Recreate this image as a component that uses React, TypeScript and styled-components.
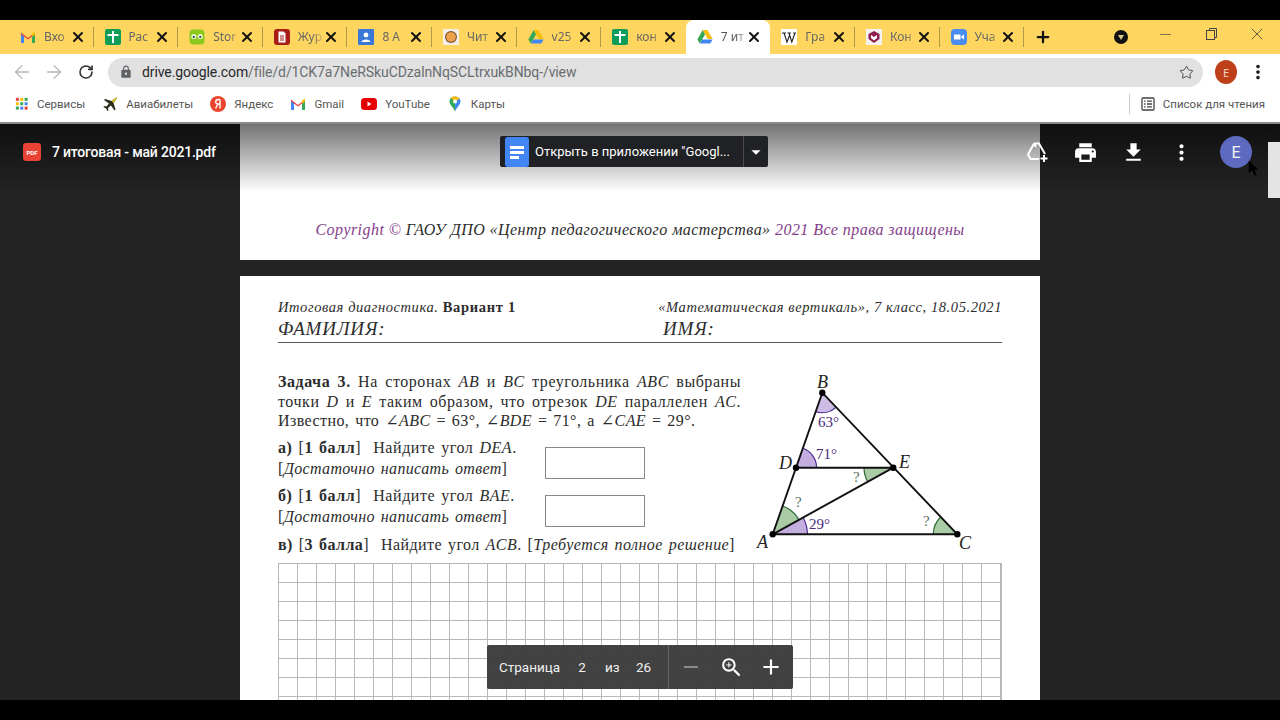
import styled, { createGlobalStyle } from "styled-components";
import { ArrowLeft, ArrowRight, Minus, Plus, RotateCw, Star, X } from "lucide-react";
import { MdAdd, MdArrowDropDown, MdFileDownload, MdLock, MdMoreVert, MdPrint, MdRemove, MdZoomIn } from "react-icons/md";

const GlobalStyle = createGlobalStyle`
	html, body {
		margin: 0;
		padding: 0;
		background: #000;
		overflow: hidden;
	}
	* {
		box-sizing: border-box;
	}
`;

function Favicon({ kind, size = 16 }: { kind: string; size?: number }) {
	const svg = { width: size, height: size, viewBox: "0 0 16 16" };
	switch (kind) {
		case "gmail":
			return (
				<svg {...svg}>
					<path d="M1 3.5 L8 9 L15 3.5 V14 H12 V7.5 L8 10.6 L4 7.5 V14 H1 Z" fill="#ea4335" />
					<path d="M1 5 V14 H4 V7.5 Z" fill="#4285f4" />
					<path d="M15 5 V14 H12 V7.5 Z" fill="#34a853" />
					<path d="M12 4.5 L15 2.5 V5.5 L12 7.8 Z" fill="#fbbc04" />
				</svg>
			);
		case "sheets":
			return (
				<svg {...svg}>
					<rect width="16" height="16" rx="2" fill="#0f9d58" />
					<path d="M2.5 5 H7 V2 H9 V5 H13.5 V7 H9 V14 H7 V7 H2.5 Z" fill="#fff" />
				</svg>
			);
		case "owl":
			return (
				<svg {...svg}>
					<rect x="0.5" y="0.5" width="15" height="15" rx="4" fill="#8cc81e" />
					<circle cx="4.8" cy="7.5" r="2.6" fill="#e8f5d0" />
					<circle cx="11.2" cy="7.5" r="2.6" fill="#e8f5d0" />
					<circle cx="4.8" cy="8" r="1.1" fill="#234" />
					<circle cx="11.2" cy="8" r="1.1" fill="#234" />
				</svg>
			);
		case "journal":
			return (
				<svg {...svg}>
					<rect width="16" height="16" rx="3" fill="#a81d16" />
					<path d="M4.5 2.5 H9.5 L11.5 4.5 V13.5 H4.5 Z" fill="#fff" />
					<path d="M6 7 H10 M6 9 H10 M6 11 H10" stroke="#a81d16" />
				</svg>
			);
		case "contact":
			return (
				<svg {...svg}>
					<rect width="16" height="16" rx="1" fill="#3a78d8" />
					<circle cx="8" cy="6" r="2.4" fill="#fff" />
					<path d="M3.5 13 C3.5 9.5 12.5 9.5 12.5 13 Z" fill="#fff" />
				</svg>
			);
		case "egg":
			return (
				<svg {...svg}>
					<rect width="16" height="16" fill="#f3efe6" />
					<circle cx="8" cy="8" r="6" fill="#7a5a3a" />
					<circle cx="8" cy="8" r="4.8" fill="#f0a04a" />
				</svg>
			);
		case "drive":
			return (
				<svg {...svg}>
					<path d="M5.6 1 H10.4 L15.6 10 H10.8 Z" fill="#fbbc04" />
					<path d="M5.6 1 L0.4 10.4 L2.8 14.6 L8 5.4 Z" fill="#34a853" />
					<path d="M5.2 10.4 H15.6 L13.2 14.6 H2.8 Z" fill="#4285f4" />
				</svg>
			);
		case "wiki":
			return (
				<svg {...svg}>
					<rect width="16" height="16" fill="#fff" />
					<path d="M1 4 H5 M3 4 L6 13 L8.5 6.5 M6.5 4 H10 M8 4 L10.8 13 L14 4 M12.2 4 H15" stroke="#222" strokeWidth="1.1" fill="none" />
				</svg>
			);
		case "kon":
			return (
				<svg {...svg}>
					<rect width="16" height="16" fill="#f5f0f2" />
					<path d="M8 2 L13.5 5 V10 L8 14 L2.5 10 V5 Z" fill="#8e1f4f" />
					<path d="M5 6 L8 8 L11 6 V9 L8 11.5 L5 9 Z" fill="#fff" />
				</svg>
			);
		case "zoom":
			return (
				<svg {...svg}>
					<rect width="16" height="16" rx="4" fill="#4a8cf0" />
					<path d="M3 5.5 H9.5 V10.5 H3 Z M10.3 7.4 L13 5.5 V10.5 L10.3 8.6 Z" fill="#fff" />
				</svg>
			);
		case "apps":
			return (
				<svg {...svg}>
					{[1, 6, 11].flatMap((y, r) =>
						[1, 6, 11].map((x, c) => (
							<rect key={`${r}${c}`} x={x} y={y} width="3.4" height="3.4" fill={["#ea4335", "#fbbc04", "#34a853", "#4285f4"][(r + c) % 4]} />
						)),
					)}
				</svg>
			);
		case "plane":
			return (
				<svg {...svg}>
					<path d="M14.5 1.5 L9.5 5 L3 3 L2 4 L7 7.5 L4.5 10.5 L2 10 L1.5 11 L4 12.5 L5.5 15 L6.5 14.5 L6 12 L9 9.5 L12.5 14.5 L13.5 13.5 L11.5 7 L15 2 Z" fill="#2b2b1a" />
					<path d="M14.5 1.5 L9.5 5 L11.5 7 L15 2 Z" fill="#d6c21e" />
				</svg>
			);
		case "yandex":
			return (
				<svg {...svg}>
					<circle cx="8" cy="8" r="8" fill="#e8452c" />
					<path d="M10 3.5 V12.5 M10 3.5 H8 C5 3.5 5 8 8 8 H10 M8 8 L5.5 12.5" stroke="#fff" strokeWidth="1.4" fill="none" />
				</svg>
			);
		case "youtube":
			return (
				<svg {...svg}>
					<rect y="2" width="16" height="12" rx="3.5" fill="#e60000" />
					<path d="M6.5 5.5 L10.5 8 L6.5 10.5 Z" fill="#fff" />
				</svg>
			);
		case "maps":
			return (
				<svg {...svg}>
					<path d="M8 0.5 C4.5 0.5 2.5 3 2.5 5.6 C2.5 9 6.5 11.5 8 15.5 Z" fill="#34a853" />
					<path d="M8 0.5 C11.5 0.5 13.5 3 13.5 5.6 C13.5 9 9.5 11.5 8 15.5 Z" fill="#4285f4" />
					<path d="M4 2 C5 1 6.5 0.5 8 0.5 C10 0.5 11.5 1.3 12.5 2.6 L8 6 Z" fill="#fbbc04" />
					<circle cx="8" cy="5.6" r="2" fill="#fff" />
				</svg>
			);
		default:
			return null;
	}
}

// titles are cut short by the browser in the screenshot
const tabs = [
	{ icon: "gmail", title: "Вхо" },
	{ icon: "sheets", title: "Рас" },
	{ icon: "owl", title: "Stor" },
	{ icon: "journal", title: "Жур" },
	{ icon: "contact", title: "8 А" },
	{ icon: "egg", title: "Чит" },
	{ icon: "drive", title: "v25" },
	{ icon: "sheets", title: "кон" },
	{ icon: "drive", title: "7 ит", active: true },
	{ icon: "wiki", title: "Гра" },
	{ icon: "kon", title: "Кон" },
	{ icon: "zoom", title: "Уча" },
];

const bookmarks = [
	{ icon: "apps", label: "Сервисы" },
	{ icon: "plane", label: "Авиабилеты" },
	{ icon: "yandex", label: "Яндекс" },
	{ icon: "gmail", label: "Gmail" },
	{ icon: "youtube", label: "YouTube" },
	{ icon: "maps", label: "Карты" },
];

function TriangleFigure() {
	return (
		<FigureSvg viewBox="750 372 252 183" width="252" height="183">
			<path d="M822.3 392.7 L815.7 411.6 A20 20 0 0 0 836 407.2 Z" fill="#cdbbe6" />
			<path d="M815.7 411.6 A20 20 0 0 0 836 407.2" fill="none" stroke="#4b2a8c" strokeWidth="1.2" />
			<path d="M796 467.7 L816.6 467.7 A20.6 20.6 0 0 0 802.8 448.3 Z" fill="#c4aee0" />
			<path d="M816.6 467.7 A20.6 20.6 0 0 0 802.8 448.3" fill="none" stroke="#4b2a8c" strokeWidth="1.2" />
			<path d="M772.7 534.3 L807.4 534.3 A34.7 34.7 0 0 0 803.1 517.5 Z" fill="#c4aee0" />
			<path d="M807.4 534.3 A34.7 34.7 0 0 0 803.1 517.5" fill="none" stroke="#4b2a8c" strokeWidth="1.2" />
			<path d="M772.7 534.3 L798.9 519.8 A30 30 0 0 0 782.6 506 Z" fill="#a9cba6" />
			<path d="M798.9 519.8 A30 30 0 0 0 782.6 506" fill="none" stroke="#2f6b3a" strokeWidth="1.2" />
			<path d="M893.3 467.7 L864 467.7 A29.3 29.3 0 0 0 867.7 481.9 Z" fill="#a9cba6" />
			<path d="M864 467.7 A29.3 29.3 0 0 0 867.7 481.9" fill="none" stroke="#2f6b3a" strokeWidth="1.2" />
			<path d="M957.3 534.3 L933.3 534.3 A24 24 0 0 1 940.7 517 Z" fill="#a9cba6" />
			<path d="M933.3 534.3 A24 24 0 0 1 940.7 517" fill="none" stroke="#2f6b3a" strokeWidth="1.2" />
			<path d="M822.3 392.7 L772.7 534.3 H957.3 Z M796 467.7 H893.3 L772.7 534.3" fill="none" stroke="#111" strokeWidth="1.9" />
			{[
				[822.3, 392.7],
				[772.7, 534.3],
				[957.3, 534.3],
				[796, 467.7],
				[893.3, 467.7],
			].map(([cx, cy]) => (
				<circle key={cx} cx={cx} cy={cy} r="3.2" fill="#000" />
			))}
			<PointLabel x="817" y="388">B</PointLabel>
			<PointLabel x="779" y="469">D</PointLabel>
			<PointLabel x="899" y="468">E</PointLabel>
			<PointLabel x="757" y="548">A</PointLabel>
			<PointLabel x="959" y="549">C</PointLabel>
			<AngleLabel x="818" y="427">63°</AngleLabel>
			<AngleLabel x="816" y="459">71°</AngleLabel>
			<AngleLabel x="809" y="529">29°</AngleLabel>
			<QuestionLabel x="853" y="482">?</QuestionLabel>
			<QuestionLabel x="795" y="507">?</QuestionLabel>
			<QuestionLabel x="923" y="526">?</QuestionLabel>
		</FigureSvg>
	);
}

export default function App() {
	return (
		<>
			<GlobalStyle />
			<Screen>
				<Letterbox />
				<TabStrip>
					{tabs.map((tab, index) => {
						const nextActive = tabs[index + 1]?.active;
						return (
							<Tab key={tab.title} $active={tab.active}>
								<TabInner $divider={!tab.active && !nextActive}>
									<Favicon kind={tab.icon} />
									<TabTitle $active={tab.active}>{tab.title}</TabTitle>
									<X size={16} strokeWidth={3} color="#111" />
								</TabInner>
							</Tab>
						);
					})}
					<NewTab>
						<Plus size={18} strokeWidth={3} color="#111" />
					</NewTab>
					<ThemeBadge />
					<WindowControls>
						<WindowButton>
							<Minus size={17} strokeWidth={1} color="#444" />
						</WindowButton>
						<WindowButton>
							<svg width="11" height="12" viewBox="0 0 11 12" fill="none" stroke="#444">
								<path d="M3.5 2.5 V0.5 H10.5 V9.5 H8.5" />
								<rect x="0.5" y="2.5" width="8" height="9" />
							</svg>
						</WindowButton>
						<WindowButton>
							<X size={20} strokeWidth={1} color="#444" />
						</WindowButton>
					</WindowControls>
				</TabStrip>

				<Toolbar>
					<NavButton>
						<ArrowLeft size={22} strokeWidth={1.4} color="#b4b6b8" />
					</NavButton>
					<NavButton>
						<ArrowRight size={22} strokeWidth={1.4} color="#b4b6b8" />
					</NavButton>
					<NavButton>
						<RotateCw size={16} strokeWidth={2.4} color="#333" />
					</NavButton>
					<Omnibox>
						<MdLock size={14} color="#5f6368" />
						<UrlText>
							<b>drive.google.com</b>/file/d/1CK7a7NeRSkuCDzalnNqSCLtrxukBNbq-/view
						</UrlText>
						<Star size={15} strokeWidth={1.5} color="#444" />
					</Omnibox>
					<ProfileDot>E</ProfileDot>
					<MdMoreVert size={22} color="#222" />
				</Toolbar>

				<BookmarkBar>
					{bookmarks.map((item) => (
						<Bookmark key={item.label}>
							<Favicon kind={item.icon} size={item.icon === "apps" ? 14 : 16} />
							{item.label}
						</Bookmark>
					))}
					<ReadingList>
						<svg width="14" height="14" viewBox="0 0 14 14" fill="none" stroke="#444" strokeWidth="1.3">
							<rect x="1" y="1" width="12" height="12" rx="1" />
							<path d="M3 4.2 H4.5 M6 4.2 H11 M3 7 H4.5 M6 7 H11 M3 9.8 H4.5 M6 9.8 H11" />
						</svg>
						Список для чтения
					</ReadingList>
				</BookmarkBar>

				<Viewer>
					<PageStack>
						<CopyrightPage>
							<CopyrightLine>
								<Purple>Copyright ©</Purple> ГАОУ ДПО «Центр педагогического мастерства» <Purple>2021 Все права защищены</Purple>
							</CopyrightLine>
						</CopyrightPage>
						<TaskPage>
							<SheetHead>
								<span>
									Итоговая диагностика. <HeadBold>Вариант 1</HeadBold>
								</span>
								<span>«Математическая вертикаль», 7 класс, 18.05.2021</span>
							</SheetHead>
							<NameRow>
								<NameCell>ФАМИЛИЯ:</NameCell>
								<span>ИМЯ:</span>
							</NameRow>
							<ProblemRow>
								<ProblemText>
									<JustLine>
										<b>Задача 3.</b> На сторонах <i>AB</i> и <i>BC</i> треугольника <i>ABC</i> выбраны
									</JustLine>
									<JustLine>
										точки <i>D</i> и <i>E</i> таким образом, что отрезок <i>DE</i> параллелен <i>AC</i>.
									</JustLine>
									<FactLine>
										Известно, что ∠<i>ABC</i> = 63°, ∠<i>BDE</i> = 71°, а ∠<i>CAE</i> = 29°.
									</FactLine>
									<AnswerRow>
										<div>
											<FreeLine>
												<b>а)</b> [<b>1 балл</b>] &nbsp;Найдите угол <i>DEA</i>.
											</FreeLine>
											<HintLine>
												[<i>Достаточно написать ответ</i>]
											</HintLine>
										</div>
										<AnswerBox />
									</AnswerRow>
									<AnswerRow>
										<div>
											<FreeLine>
												<b>б)</b> [<b>1 балл</b>] &nbsp;Найдите угол <i>BAE</i>.
											</FreeLine>
											<HintLine>
												[<i>Достаточно написать ответ</i>]
											</HintLine>
										</div>
										<AnswerBox />
									</AnswerRow>
									<LastLine>
										<b>в)</b> [<b>3 балла</b>] &nbsp;Найдите угол <i>ACB</i>. [<i>Требуется полное решение</i>]
									</LastLine>
								</ProblemText>
								<TriangleFigure />
							</ProblemRow>
							<GraphPaper />
						</TaskPage>
					</PageStack>

					<ViewerHeader>
						<FileTitle>
							<PdfBadge>PDF</PdfBadge>
							7 итоговая - май 2021.pdf
						</FileTitle>
						<OpenWith>
							<svg width="24" height="30" viewBox="0 0 24 30">
								<rect width="24" height="30" rx="3" fill="#4285f4" />
								<path d="M5 9 H19 V12 H5 Z M5 14 H19 V17 H5 Z M5 19 H14 V22 H5 Z" fill="#fff" />
							</svg>
							<OpenWithLabel>Открыть в приложении "Googl...</OpenWithLabel>
							<OpenWithCaret>
								<MdArrowDropDown size={22} color="#fff" />
							</OpenWithCaret>
						</OpenWith>
						<HeaderActions>
							<ActionButton>
								<svg width="24" height="24" viewBox="0 0 24 24" fill="none" stroke="#fff" strokeWidth="2" strokeLinejoin="round">
									<path d="M9 3.5 H14 L20 14 M9 3.5 L3 14.5 L5.5 19 H14 M9 3.5 L11 7" />
									<path d="M19 15 V22 M15.5 18.5 H22.5" />
								</svg>
							</ActionButton>
							<ActionButton>
								<MdPrint size={25} color="#fff" />
							</ActionButton>
							<ActionButton>
								<MdFileDownload size={25} color="#fff" />
							</ActionButton>
							<ActionButton>
								<MdMoreVert size={25} color="#fff" />
							</ActionButton>
							<AccountButton>E</AccountButton>
						</HeaderActions>
					</ViewerHeader>

					<MouseCursor width="12" height="18" viewBox="0 0 16 24">
						<path d="M1 1 V18 L5.5 14 L8.5 21 L11.5 19.8 L8.6 13 H14 Z" fill="#000" />
					</MouseCursor>
					<ScrollThumb />

					<PageControls>
						<PageLabel $width={72} $pad={12}>
							Страница
						</PageLabel>
						<PageLabel $width={46} $center>
							2
						</PageLabel>
						<PageLabel $width={14} $center>
							из
						</PageLabel>
						<PageLabel $width={49} $center>
							26
						</PageLabel>
						<ControlDivider />
						<ZoomButton>
							<MdRemove size={24} color="#8a8a8a" />
						</ZoomButton>
						<ZoomButton>
							<MdZoomIn size={25} color="#fff" />
						</ZoomButton>
						<ZoomButton>
							<MdAdd size={26} color="#fff" />
						</ZoomButton>
					</PageControls>
				</Viewer>
				<Letterbox />
			</Screen>
		</>
	);
}

const chrome = `"Noto Sans", "Liberation Sans", sans-serif`;
const roboto = `Roboto, "Liberation Sans", sans-serif`;
const paper = `"Liberation Serif", "DejaVu Serif", serif`;

const Screen = styled.div`
	width: 1280px;
	height: 720px;
	display: flex;
	flex-direction: column;
	background: #000;
	overflow: hidden;
	font-family: ${chrome};
`;
const Letterbox = styled.div`
	height: 20px;
	flex: none;
	background: #000;
`;
const TabStrip = styled.div`
	height: 34px;
	flex: none;
	display: flex;
	align-items: center;
	padding-left: 9px;
	background: #fdd55f;
`;
const Tab = styled.div<{ $active?: boolean }>`
	width: 84.6px;
	height: 34px;
	flex: none;
	display: flex;
	align-items: center;
	padding-bottom: 1px;
	background: ${(p) => (p.$active ? "#fff" : "transparent")};
	border-radius: ${(p) => (p.$active ? "8px 8px 0 0" : "0")};
`;
const TabInner = styled.div<{ $divider?: boolean }>`
	width: 100%;
	height: 20px;
	display: flex;
	align-items: center;
	padding: 0 7px 0 11px;
	border-right: 1px solid ${(p) => (p.$divider ? "#b09a4c" : "transparent")};
`;
const TabTitle = styled.span<{ $active?: boolean }>`
	flex: 1;
	margin-left: 8px;
	white-space: nowrap;
	font-size: 12px;
	color: ${(p) => (p.$active ? "#555" : "#666")};
	-webkit-mask-image: linear-gradient(to right, #000 60%, rgba(0, 0, 0, 0.35) 90%);
	mask-image: linear-gradient(to right, #000 60%, rgba(0, 0, 0, 0.35) 90%);
`;
const NewTab = styled.div`
	margin-left: 10px;
	display: flex;
`;
const ThemeBadge = styled.div`
	width: 14px;
	height: 14px;
	margin-left: 62px;
	border-radius: 50%;
	background: #111;
	display: flex;
	align-items: center;
	justify-content: center;
	&::after {
		content: "";
		border-left: 3.5px solid transparent;
		border-right: 3.5px solid transparent;
		border-top: 5px solid #d8c98a;
	}
`;
const WindowControls = styled.div`
	margin-left: auto;
	align-self: flex-start;
	display: flex;
`;
const WindowButton = styled.div`
	width: 46px;
	height: 28px;
	display: flex;
	align-items: center;
	justify-content: center;
`;
const Toolbar = styled.div`
	height: 36px;
	flex: none;
	display: flex;
	align-items: center;
	padding-left: 6px;
	background: #fff;
`;
const NavButton = styled.div`
	width: 32px;
	display: flex;
	justify-content: center;
`;
const Omnibox = styled.div`
	width: 1095px;
	height: 29px;
	margin-left: 6px;
	padding: 0 9px 0 11px;
	display: flex;
	align-items: center;
	border-radius: 15px;
	background: #e1e1e1;
`;
const UrlText = styled.span`
	flex: 1;
	margin-left: 9px;
	font-family: ${roboto};
	font-size: 14px;
	letter-spacing: -0.1px;
	color: #6a6d70;
	b {
		font-weight: 400;
		color: #26282b;
	}
`;
const ProfileDot = styled.div`
	width: 22px;
	height: 24px;
	margin: 0 10px 0 12px;
	border-radius: 50%;
	background: #bf3f18;
	color: #f3d5c8;
	font-size: 11px;
	display: flex;
	align-items: center;
	justify-content: center;
`;
const BookmarkBar = styled.div`
	height: 34px;
	flex: none;
	display: flex;
	align-items: center;
	gap: 17px;
	padding: 0 15px 4px;
	background: #fff;
	border-bottom: 2px solid #8a8a8a;
`;
const Bookmark = styled.div`
	display: flex;
	align-items: center;
	gap: 8px;
	font-family: ${roboto};
	font-size: 11.5px;
	color: #555;
`;
const ReadingList = styled(Bookmark)`
	margin-left: auto;
	height: 20px;
	padding-left: 11px;
	border-left: 1px solid #ccc;
`;
const Viewer = styled.div`
	position: relative;
	flex: 1;
	min-height: 0;
	background: #232323;
	overflow: hidden;
`;
const PageStack = styled.div`
	width: 800px;
	height: 100%;
	margin: 0 auto;
	display: flex;
	flex-direction: column;
	gap: 16px;
	font-family: ${paper};
	color: #2c2c2c;
`;
const CopyrightPage = styled.div`
	height: 136px;
	flex: none;
	display: flex;
	align-items: flex-end;
	justify-content: center;
	padding-bottom: 21px;
	background: #fff;
`;
const CopyrightLine = styled.div`
	font-size: 16px;
	font-style: italic;
	letter-spacing: 0.45px;
	line-height: 18px;
`;
const Purple = styled.span`
	color: #84408a;
`;
const TaskPage = styled.div`
	flex: 1;
	min-height: 0;
	display: flex;
	flex-direction: column;
	padding: 21px 38px 0;
	background: #fff;
`;
const SheetHead = styled.div`
	height: 20px;
	display: flex;
	justify-content: space-between;
	font-size: 14.5px;
	font-style: italic;
	line-height: 20px;
	letter-spacing: 0.58px;
`;
const HeadBold = styled.b`
	font-style: normal;
	letter-spacing: 0.7px;
`;
const NameRow = styled.div`
	height: 26px;
	display: flex;
	font-size: 19px;
	font-style: italic;
	line-height: 24px;
	letter-spacing: 0.8px;
	border-bottom: 1px solid #555;
`;
const NameCell = styled.span`
	width: 385px;
`;
const ProblemRow = styled.div`
	margin-top: 29px;
	display: flex;
`;
const ProblemText = styled.div`
	width: 472px;
	flex: none;
	font-size: 16px;
	line-height: 20px;
	letter-spacing: 0.55px;
`;
const JustLine = styled.div`
	width: 463px;
	height: 19.5px;
	white-space: nowrap;
	text-align: justify;
	text-align-last: justify;
`;
const FreeLine = styled.div`
	white-space: nowrap;
	word-spacing: 1.5px;
`;
const FactLine = styled(FreeLine)`
	letter-spacing: 0.42px;
`;
const HintLine = styled(FreeLine)`
	margin-top: 1px;
	letter-spacing: 0.35px;
`;
const LastLine = styled(FreeLine)`
	margin-top: 8px;
	letter-spacing: 0.44px;
`;
const AnswerRow = styled.div`
	margin-top: 7px;
	display: flex;
	align-items: flex-end;
	> div:first-child {
		width: 267px;
	}
`;
const AnswerBox = styled.div`
	width: 100px;
	height: 32px;
	border: 1px solid #888;
`;
const FigureSvg = styled.svg`
	flex: none;
	display: block;
`;
const PointLabel = styled.text`
	font-family: ${paper};
	font-style: italic;
	font-size: 18px;
	fill: #222;
`;
const AngleLabel = styled.text`
	font-family: ${paper};
	font-size: 15px;
	fill: #4a2a7c;
`;
const QuestionLabel = styled.text`
	font-family: ${paper};
	font-size: 15px;
	fill: #5a6e5e;
`;
const GraphPaper = styled.div`
	flex: 1;
	margin-top: 8px;
	border-right: 1px solid #b8b8b8;
	background-image: linear-gradient(to right, #b8b8b8 1px, transparent 1px), linear-gradient(to bottom, #b8b8b8 1px, transparent 1px);
	background-size: 19px 19px;
`;
const ViewerHeader = styled.div`
	position: absolute;
	top: 0;
	left: 0;
	right: 0;
	height: 68px;
	padding: 12px 28px 0 23px;
	display: flex;
	align-items: flex-start;
	background: linear-gradient(to bottom, rgba(0, 0, 0, 0.55), rgba(0, 0, 0, 0));
`;
const FileTitle = styled.div`
	width: 477px;
	height: 32px;
	flex: none;
	display: flex;
	align-items: center;
	gap: 11px;
	font-family: ${roboto};
	font-weight: 500;
	font-size: 14px;
	letter-spacing: -0.2px;
	color: #fff;
`;
const PdfBadge = styled.span`
	width: 18px;
	height: 18px;
	border-radius: 3px;
	background: #ea4335;
	color: #fff;
	font-size: 6px;
	font-weight: 700;
	letter-spacing: 0;
	display: flex;
	align-items: center;
	justify-content: center;
`;
const OpenWith = styled.div`
	width: 268px;
	height: 31px;
	flex: none;
	padding-left: 5px;
	display: flex;
	align-items: center;
	border-radius: 2px;
	background: #202124;
`;
const OpenWithLabel = styled.span`
	width: 208px;
	margin-left: 6px;
	font-family: ${roboto};
	font-size: 13px;
	color: #fff;
	white-space: nowrap;
`;
const OpenWithCaret = styled.div`
	height: 31px;
	width: 25px;
	display: flex;
	align-items: center;
	justify-content: center;
	border-left: 1px solid #4a4a4a;
`;
const HeaderActions = styled.div`
	margin-left: auto;
	display: flex;
	align-items: center;
	height: 32px;
`;
const ActionButton = styled.div`
	width: 48px;
	display: flex;
	justify-content: center;
`;
const AccountButton = styled.div`
	width: 32px;
	height: 32px;
	margin-left: 15px;
	border-radius: 50%;
	background: #5c6bc0;
	color: #f3f3f3;
	font-family: ${roboto};
	font-size: 16px;
	display: flex;
	align-items: center;
	justify-content: center;
`;
const MouseCursor = styled.svg`
	position: absolute;
	left: 1248px;
	top: 36px;
`;
const ScrollThumb = styled.div`
	position: absolute;
	right: 0;
	top: 18px;
	width: 12px;
	height: 56px;
	background: #e4e4e4;
`;
const PageControls = styled.div`
	position: absolute;
	left: 487px;
	bottom: 11px;
	width: 306px;
	height: 44px;
	display: flex;
	align-items: center;
	border-radius: 2px;
	background: rgba(60, 60, 60, 0.97);
	font-family: ${roboto};
	font-size: 13.5px;
	color: #f1f1f1;
`;
const PageLabel = styled.span<{ $width: number; $pad?: number; $center?: boolean }>`
	width: ${(p) => p.$width}px;
	padding-left: ${(p) => p.$pad ?? 0}px;
	text-align: ${(p) => (p.$center ? "center" : "left")};
`;
const ControlDivider = styled.div`
	width: 1px;
	height: 44px;
	margin-right: 2px;
	background: #666;
`;
const ZoomButton = styled.div`
	width: 40px;
	display: flex;
	justify-content: center;
`;
